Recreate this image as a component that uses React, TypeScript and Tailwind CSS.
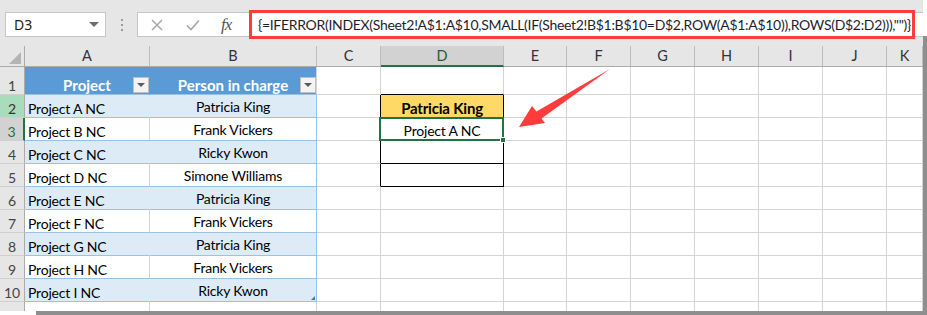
import React from "react";

const cols = [
  { k: "A", w: "w-[125px]" },
  { k: "B", w: "w-[167px]" },
  { k: "C", w: "w-[64px]" },
  { k: "D", w: "w-[123px]" },
  { k: "E", w: "w-[63px]" },
  { k: "F", w: "w-[64px]" },
  { k: "G", w: "w-[64px]" },
  { k: "H", w: "w-[64px]" },
  { k: "I", w: "w-[64px]" },
  { k: "J", w: "w-[64px]" },
  { k: "K", w: "w-[36px]" },
];

const projects = ["A", "B", "C", "D", "E", "F", "G", "H", "I"].map((l) => `Project ${l} NC`);
const persons = [
  "Patricia King",
  "Frank Vickers",
  "Ricky Kwon",
  "Simone Williams",
  "Patricia King",
  "Frank Vickers",
  "Patricia King",
  "Frank Vickers",
  "Ricky Kwon",
];

const font = { fontFamily: "Lato, 'Open Sans', sans-serif" };

function DropBtn() {
  return (
    <div className="ml-auto mb-px w-[16px] h-[16px] bg-[#f3f3f3] border border-[#bfbfbf] flex items-center justify-center shrink-0">
      <div className="w-0 h-0 border-l-[4px] border-r-[4px] border-t-[4px] border-l-transparent border-r-transparent border-t-[#5a5a5a]" />
    </div>
  );
}

function cellFor(r: number, k: string): { cls: string; content: React.ReactNode } {
  const base = "border-r border-b border-r-[#d4d4d4] border-b-[#d4d4d4] bg-white";
  if (r === 1) {
    if (k === "A")
      return {
        cls: "bg-[#5b9bd5] border-r border-b border-r-[#5b9bd5] border-b-[#9bc2e6]",
        content: (
          <div className="flex items-end w-full h-full">
            <span className="flex-1 text-center text-white font-bold text-[15px] tracking-normal pb-[1px] pl-[16px]">Project</span>
            <DropBtn />
          </div>
        ),
      };
    if (k === "B")
      return {
        cls: "bg-[#5b9bd5] border-r border-b border-r-[#d4d4d4] border-b-[#9bc2e6]",
        content: (
          <div className="flex items-end w-full h-full">
            <span className="flex-1 text-center text-white font-bold text-[15px] tracking-normal pb-[1px] pl-[16px]">
              Person in charge
            </span>
            <DropBtn />
          </div>
        ),
      };
    if (k === "D") return { cls: "border-r border-b border-r-[#d4d4d4] border-b-black bg-white", content: null };
    return { cls: base, content: null };
  }
  if (r >= 2 && r <= 10) {
    const i = r - 2;
    const blue = r % 2 === 0;
    if (k === "A")
      return {
        cls: blue
          ? "bg-[#ddebf7] border-r border-b border-r-[#ddebf7] border-b-[#9bc2e6]"
          : "bg-white border-r border-b border-r-[#d4d4d4] border-b-[#9bc2e6]",
        content: <span className="pl-[3px]">{projects[i]}</span>,
      };
    if (k === "B")
      return {
        cls: blue
          ? "bg-[#ddebf7] border-r border-b border-r-[#9bc2e6] border-b-[#9bc2e6] relative"
          : "bg-white border-r border-b border-r-[#9bc2e6] border-b-[#9bc2e6]",
        content: (
          <>
            <span className="w-full text-center pb-[2px]">{persons[i]}</span>
            {r === 10 && (
              <div className="absolute right-[1px] bottom-[1px] w-0 h-0 border-l-[4px] border-b-[4px] border-l-transparent border-b-[#4472c4]" />
            )}
          </>
        ),
      };
    if (k === "C" && r <= 5)
      return { cls: "border-r border-b border-r-black border-b-[#d4d4d4] bg-white", content: null };
    if (k === "D" && r <= 5) {
      if (r === 2)
        return {
          cls: "border-r border-b border-r-black border-b-black bg-[#ffd966]",
          content: <span className="w-full text-center font-bold text-[15px] pb-[1px]">Patricia King</span>,
        };
      if (r === 3)
        return {
          cls: "border-r border-b border-r-black border-b-black bg-white relative",
          content: (
            <>
              <span className="w-full text-center pb-[1px]">Project A NC</span>
              <div className="absolute -left-[2px] -top-[1px] -right-[1px] -bottom-[1px] border-2 border-[#217346]" />
              <div className="absolute -right-[3px] -bottom-[3px] w-[6px] h-[6px] bg-[#217346] border border-white" />
            </>
          ),
        };
      return { cls: "border-r border-b border-r-black border-b-black bg-white", content: null };
    }
  }
  return { cls: base, content: null };
}

function Row({ r, h }: { r: number; h: string }) {
  let hdrCls = "bg-[#e6e6e6] text-[#444]";
  if (r === 2) hdrCls = "bg-[#a9dbbd] text-[#333]";
  if (r === 3) hdrCls = "bg-[#d2d2d2] text-[#217346]";
  return (
    <div className={`flex shrink-0 leading-[16px] ${h}`}>
      <div
        className={`w-[25px] shrink-0 flex items-end justify-center border-b border-b-[#cfcfcf] ${
          r === 3 ? "border-r-2 border-r-[#217346]" : "border-r border-r-[#ababab]"
        } ${hdrCls} text-[14px]`}
      >
        {r}
      </div>
      {cols.map((c) => {
        const { cls, content } = cellFor(r, c.k);
        return (
          <div key={c.k} className={`${c.w} shrink-0 flex items-end overflow-visible ${cls}`}>
            {content}
          </div>
        );
      })}
    </div>
  );
}

export default function App() {
  const rows = [1, 2, 3, 4, 5, 6, 7, 8, 9, 10, 11];
  return (
    <div
      className="w-[927px] h-[315px] bg-white overflow-hidden relative text-[14px] tracking-[-0.2px] text-black"
      style={font}
    >
      <div className="w-[923px] h-[311px] bg-[#e6e6e6] flex flex-col overflow-hidden shadow-[20px_20px_0_-16px_#8e8e8e]">
        {/* toolbar */}
        <div className="h-[46px] shrink-0 flex items-start pt-[12px]">
          <div
            className="ml-[5px] w-[101px] h-[25px] bg-white border border-[#c6c6c6] flex items-center pl-[8px] pr-[6px] text-[14px] tracking-normal text-[#222]"
            style={{ fontFamily: "'Noto Sans', sans-serif" }}
          >
            <span>D3</span>
            <div className="ml-auto w-0 h-0 border-l-[5px] border-r-[5px] border-t-[5px] border-l-transparent border-r-transparent border-t-[#6d6d6d]" />
          </div>
          <div className="w-[31px] h-[25px] flex flex-col items-center justify-center gap-[3px]">
            <div className="w-[2px] h-[2px] bg-[#9a9a9a]" />
            <div className="w-[2px] h-[2px] bg-[#9a9a9a]" />
            <div className="w-[2px] h-[2px] bg-[#9a9a9a]" />
          </div>
          <div className="w-[786px] h-[25px] bg-white border-y border-l border-[#c6c6c6] flex items-center">
            <div className="w-[111px] h-full flex items-center shrink-0">
              <svg width="14" height="14" viewBox="0 0 14 14" className="ml-[12px]">
                <path d="M2 2 L12 12 M12 2 L2 12" stroke="#a8a8a8" strokeWidth="1.5" />
              </svg>
              <svg width="16" height="14" viewBox="0 0 16 14" className="ml-[21px]">
                <path d="M2 7.5 L6 11.5 L14 2.5" stroke="#a8a8a8" strokeWidth="1.6" fill="none" />
              </svg>
              <span
                className="ml-[20px] text-[17px] italic text-[#555] leading-none tracking-[-1px]"
                style={{ fontFamily: "'Liberation Serif', serif" }}
              >
                fx
              </span>
            </div>
            <div className="w-[666px] h-[29px] -my-[2px] border-[3px] border-[#ff3b3b] bg-white flex items-center pl-[6px] shrink-0 text-[14px] tracking-[-0.3px] text-[#1e1e2e] whitespace-nowrap overflow-hidden">
              {'{=IFERROR(INDEX(Sheet2!A$1:A$10,SMALL(IF(Sheet2!B$1:B$10=D$2,ROW(A$1:A$10)),ROWS(D$2:D2))),"")}'}
            </div>
          </div>
        </div>
        {/* column headers */}
        <div className="flex h-[21px] shrink-0 border-b border-b-[#ababab] text-[14.5px] tracking-normal">
          <div className="w-[25px] shrink-0 border-r border-r-[#ababab] flex items-end justify-end pr-[3px] pb-[2px]">
            <svg width="12" height="12" viewBox="0 0 12 12">
              <polygon points="12,0 12,12 0,12" fill="#b4b4b4" />
            </svg>
          </div>
          {cols.map((c) => (
            <div
              key={c.k}
              className={`${c.w} shrink-0 flex items-center justify-center border-r border-r-[#bdbdbd] ${
                c.k === "D" ? "bg-[#d2d2d2] text-[#1f5c3a] border-b-2 border-b-[#217346] -mb-px" : "text-[#333]"
              }`}
            >
              {c.k}
            </div>
          ))}
        </div>
        {/* rows */}
        {rows.map((r) => (
          <Row key={r} r={r} h={r === 1 ? "h-[28px]" : "h-[23px]"} />
        ))}
      </div>
      <svg className="absolute left-0 top-0 pointer-events-none" width="927" height="315">
        <polygon points="519,127 532,106 536.5,111.5 610,69 541.5,118.5 545,123" fill="#ff3b3b" />
      </svg>
    </div>
  );
}
